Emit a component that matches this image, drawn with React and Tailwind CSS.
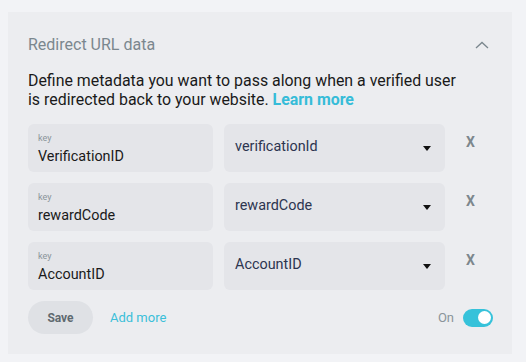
import { useState } from "react";

const rows = [
  { key: "VerificationID", value: "verificationId" },
  { key: "rewardCode", value: "rewardCode" },
  { key: "AccountID", value: "AccountID" },
];

export default function App() {
  const [on, setOn] = useState(true);

  return (
    <div
      className="w-[526px] h-[362px] bg-[#f2f3f6] pt-[12px] pl-[8px]"
      style={{ fontFamily: "Roboto, 'Liberation Sans', sans-serif" }}
    >
      <div className="w-[504px] h-[342px] bg-[#ecedf0] pl-[20px] pr-[16px] pt-[23px]">
        <div className="flex items-center justify-between pr-[7px]">
          <h2 className="text-[16px] leading-[20px] text-[#7b878e]">Redirect URL data</h2>
          <svg width="14" height="8" viewBox="0 0 14 8">
            <path d="M1 7 L7 1.5 L13 7" fill="none" stroke="#7b878e" strokeWidth="1.3" />
          </svg>
        </div>

        <p className="mt-[16px] text-[15.9px] leading-[19px] text-[#1a1a1a]">
          Define metadata you want to pass along when a verified user
          <br />
          is redirected back to your website.{" "}
          <a className="font-bold text-[#36bcd8]">Learn more</a>
        </p>

        <div className="mt-[15px] flex flex-col gap-[11px]">
          {rows.map((r) => (
            <div key={r.key} className="flex items-start">
              <div className="w-[185px] h-[48px] rounded-[6px] bg-[#e4e5e9] pl-[10px] pt-[9px]">
                <div className="text-[9px] leading-[11px] text-[#8a949a]">key</div>
                <div className="mt-[3px] text-[14.4px] leading-[20px] text-[#1a1a1a]">{r.key}</div>
              </div>
              <div className="ml-[11px] w-[221px] h-[48px] rounded-[6px] bg-[#e4e5e9] pl-[11px] pr-[14px] flex items-center justify-between">
                <span className="text-[14.4px] leading-[20px] text-[#2d3550] -mt-[2px]">{r.value}</span>
                <svg width="8" height="5" viewBox="0 0 8 5">
                  <path d="M0 0 H8 L4 5 Z" fill="#111" />
                </svg>
              </div>
              <button className="ml-[21px] mt-[9px] text-[14px] font-bold leading-[18px] text-[#7d878d]">
                X
              </button>
            </div>
          ))}
        </div>

        <div className="mt-[11px] flex items-center pr-[3px]">
          <button className="w-[65px] h-[33px] rounded-full bg-[#dfe1e5] text-[12px] font-bold text-[#5f6a70]">
            Save
          </button>
          <a className="ml-[17px] text-[13px] text-[#3bbfd9]">Add more</a>
          <span className="ml-auto text-[13px] text-[#8a949a]">On</span>
          <button
            onClick={() => setOn(!on)}
            className={`ml-[9px] w-[30px] h-[18px] rounded-full flex items-center px-[2px] ${
              on ? "bg-[#36c2da] justify-end" : "bg-[#c9ccd1] justify-start"
            }`}
          >
            <span className="w-[13px] h-[13px] rounded-full bg-white" />
          </button>
        </div>
      </div>
    </div>
  );
}
